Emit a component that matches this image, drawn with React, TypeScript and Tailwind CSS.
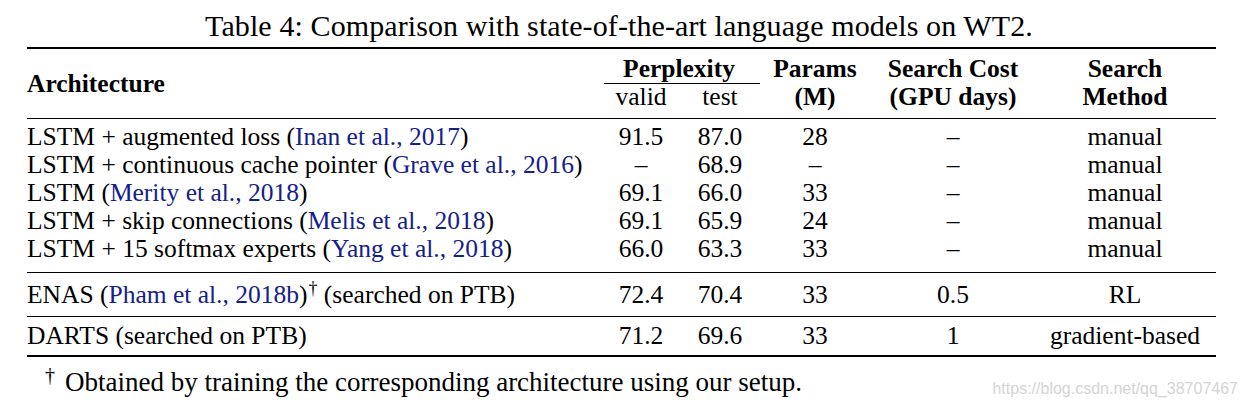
import React from "react";

const cols = "grid grid-cols-[573px_82px_76px_114px_162px_182px]";

type Row = {
    pre: string;
    cite?: string;
    post?: string;
    dagger?: boolean;
    tail?: string;
    valid: string;
    test: string;
    params: string;
    cost: string;
    method: string;
};

const lstmRows: Row[] = [
    { pre: "LSTM + augmented loss (", cite: "Inan et al., 2017", post: ")", valid: "91.5", test: "87.0", params: "28", cost: "–", method: "manual" },
    { pre: "LSTM + continuous cache pointer (", cite: "Grave et al., 2016", post: ")", valid: "–", test: "68.9", params: "–", cost: "–", method: "manual" },
    { pre: "LSTM (", cite: "Merity et al., 2018", post: ")", valid: "69.1", test: "66.0", params: "33", cost: "–", method: "manual" },
    { pre: "LSTM + skip connections (", cite: "Melis et al., 2018", post: ")", valid: "69.1", test: "65.9", params: "24", cost: "–", method: "manual" },
    { pre: "LSTM + 15 softmax experts (", cite: "Yang et al., 2018", post: ")", valid: "66.0", test: "63.3", params: "33", cost: "–", method: "manual" },
];

const enas: Row = { pre: "ENAS (", cite: "Pham et al., 2018b", post: ")", dagger: true, tail: " (searched on PTB)", valid: "72.4", test: "70.4", params: "33", cost: "0.5", method: "RL" };
const darts: Row = { pre: "DARTS (searched on PTB)", valid: "71.2", test: "69.6", params: "33", cost: "1", method: "gradient-based" };

function TableRow({ row, h }: { row: Row; h: string }) {
    return (
        <div className={`${cols} ${h} items-center`}>
            <div className="whitespace-nowrap">
                {row.pre}
                {row.cite && <span className="text-[#14208a]">{row.cite}</span>}
                {row.post}
                {row.dagger && <span className="text-[18px] relative -top-[9px] ml-[1px]">†</span>}
                {row.tail}
            </div>
            <div className="text-center">{row.valid}</div>
            <div className="text-center">{row.test}</div>
            <div className="text-center">{row.params}</div>
            <div className="text-center">{row.cost}</div>
            <div className="text-center">{row.method}</div>
        </div>
    );
}

export default function App() {
    return (
        <div className="relative w-[1250px] h-[410px] bg-white text-black font-['Liberation_Serif',serif] text-[25.5px] leading-none">
            <div className="h-[47px] pt-[11px] text-center text-[30px] pr-[12px] tracking-[0.1px]">
                Table 4: Comparison with state-of-the-art language models on WT2.
            </div>
            <div className="ml-[27px] w-[1189px]">
                <div className="h-[2px] bg-black" />
                <div className={`${cols} h-[69px] font-bold`}>
                    <div className="flex items-center pt-[1px]">Architecture</div>
                    <div className="col-span-2 flex flex-col items-center">
                        <div className="pt-[7px] h-[34px]">Perplexity</div>
                        <div className="w-[156px] h-px bg-black ml-[6px]" />
                        <div className="flex w-full font-normal">
                            <div className="w-[82px] text-center">valid</div>
                            <div className="w-[76px] text-center">test</div>
                        </div>
                    </div>
                    <div className="flex flex-col items-center pt-[7px] gap-[2px]">
                        <div>Params</div>
                        <div>(M)</div>
                    </div>
                    <div className="flex flex-col items-center pt-[7px] gap-[2px]">
                        <div>Search Cost</div>
                        <div>(GPU days)</div>
                    </div>
                    <div className="flex flex-col items-center pt-[7px] gap-[2px]">
                        <div>Search</div>
                        <div>Method</div>
                    </div>
                </div>
                <div className="h-px bg-black" />
                <div className="pt-[4px] pb-[9px]">
                    {lstmRows.map((r, i) => (
                        <TableRow key={i} row={r} h="h-[28px]" />
                    ))}
                </div>
                <div className="h-px bg-black" />
                <TableRow row={enas} h="h-[43px]" />
                <div className="h-px bg-black" />
                <TableRow row={darts} h="h-[38px]" />
                <div className="h-[2px] bg-black" />
            </div>
            <div className="pl-[45px] pt-[12px] whitespace-nowrap text-[27px]">
                <span className="text-[20px] relative -top-[9px] mr-[10px]">†</span>
                Obtained by training the corresponding architecture using our setup.
            </div>
            <div className="absolute right-[12px] top-[381px] text-[16px] text-[#d4d4d4] font-['Liberation_Sans',sans-serif]">
                https://blog.csdn.net/qq_38707467
            </div>
        </div>
    );
}
